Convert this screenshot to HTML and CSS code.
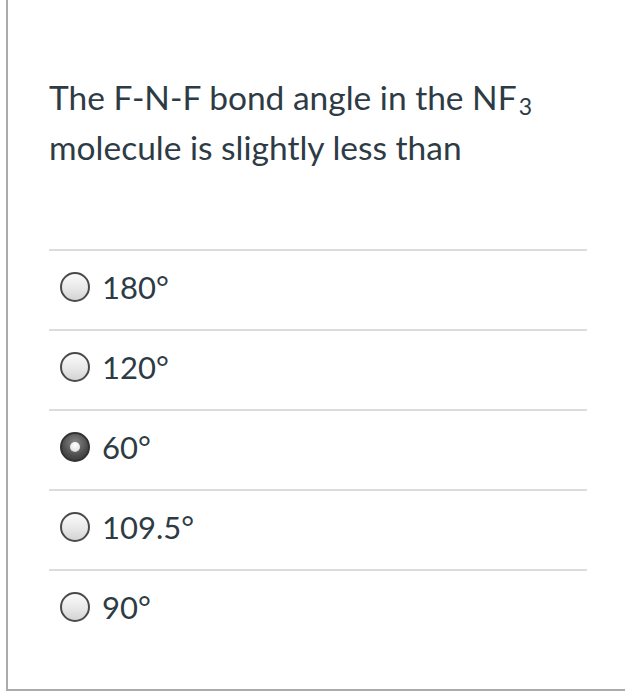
FILE: index.html
```html
<!DOCTYPE html>
<html>
<head>
<meta charset="utf-8">
<link rel="stylesheet" href="styles.css">
</head>
<body>
<div class="card">
  <p class="question">The F-N-F bond angle in the NF<sub>3</sub> molecule is slightly less than</p>
  <ul class="answers">
    <li class="answer"><span class="radio"></span><span class="label">180°</span></li>
    <li class="answer"><span class="radio"></span><span class="label">120°</span></li>
    <li class="answer"><span class="radio checked"></span><span class="label">60°</span></li>
    <li class="answer"><span class="radio"></span><span class="label">109.5°</span></li>
    <li class="answer"><span class="radio"></span><span class="label">90°</span></li>
  </ul>
</div>
</body>
</html>
```
FILE: styles.css
```css
html, body {
  margin: 0;
  padding: 0;
  background: #fff;
}
body {
  font-family: Lato, "Open Sans", sans-serif;
  color: #2d3b45;
  overflow: hidden;
}
.card {
  margin-left: 6px;
  width: 630px;
  height: 691px;
  border-left: 2px solid #ababab;
  border-bottom: 2px solid #ababab;
  padding: 0 0 0 41px;
  box-sizing: border-box;
}
.question {
  margin: 0;
  padding-top: 72px;
  padding-right: 60px;
  font-size: 33.5px;
  line-height: 50px;
}
.question sub {
  font-size: 23px;
  line-height: 0;
  vertical-align: -5px;
  margin-left: 2px;
}
.answers {
  list-style: none;
  margin: 77px 0 0 0;
  padding: 0;
  width: 538px;
}
.answer {
  display: flex;
  align-items: center;
  height: 78px;
  box-sizing: content-box;
  border-top: 2px solid #dcdcdc;
  padding-left: 11px;
}
.answer > * {
  margin-bottom: 6px;
}
.radio {
  width: 26px;
  height: 26px;
  border-radius: 50%;
  border: 2px solid #4a4a4a;
  background: linear-gradient(180deg, #fafafa 0%, #e6e6e6 60%, #d4d4d4 100%);
  flex: none;
  position: relative;
}
.radio.checked {
  background: radial-gradient(circle at 50% 35%, #8a8a8a 0%, #4c4c4c 60%, #2e2e2e 100%);
  border-color: #333;
}
.radio.checked::after {
  content: "";
  position: absolute;
  left: 8px;
  top: 8px;
  width: 10px;
  height: 10px;
  border-radius: 50%;
  background: radial-gradient(circle at 50% 30%, #ffffff 0%, #e8e8e8 60%, #bcbcbc 100%);
}
.label {
  margin-left: 12px;
  font-size: 31px;
  line-height: 40px;
}
```
